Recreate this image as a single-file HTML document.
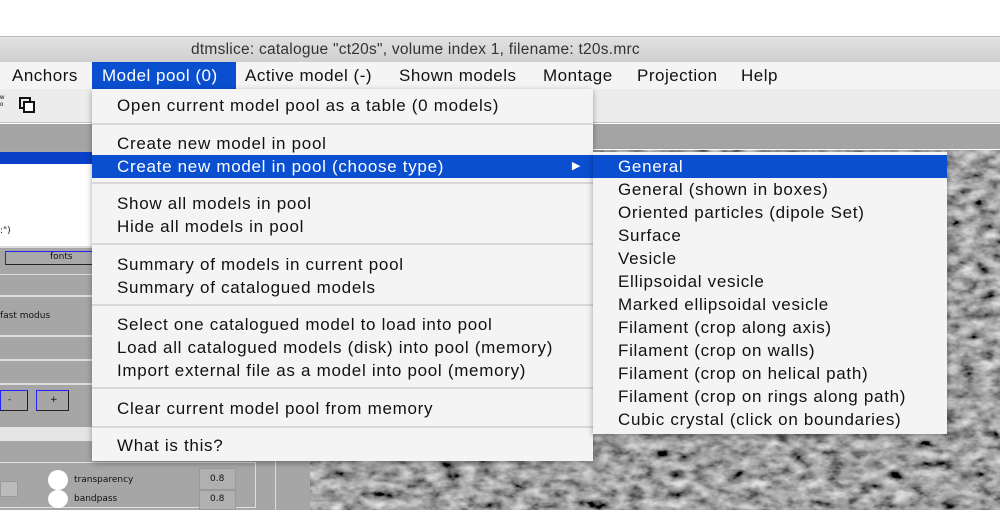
<!DOCTYPE html>
<html><head><meta charset="utf-8"><style>
*{margin:0;padding:0;box-sizing:border-box}
body{width:1000px;height:523px;overflow:hidden;background:#fff;font-family:"Liberation Sans",sans-serif;position:relative}
.a{position:absolute}
.title{left:0;top:36px;width:1000px;height:26px;background:linear-gradient(#e2e2e2,#cfcfcf);border-top:1px solid #bbb;font-size:15.5px;line-height:26px;color:#333}
.mb{left:0;top:62px;width:1000px;height:27px;background:#f4f4f4;font-size:17px;letter-spacing:0.5px;line-height:27px;color:#111}
.mb span{position:absolute;top:0}
.menu{background:#f4f4f4;box-shadow:0 2px 6px rgba(0,0,0,.35);font-size:17px;letter-spacing:0.7px;color:#111}
.it{position:absolute;left:0;right:0;height:23px;line-height:23px;padding-left:25px;white-space:nowrap}
.hl{background:#0a4fd0;color:#fff}
.sep{position:absolute;left:0;right:0;height:2px;background:#d8d8d8}
.sm{font-size:9px;font-family:"DejaVu Sans",sans-serif;color:#111}
</style></head><body>
<div class="a title"><span style="position:absolute;left:191px;letter-spacing:0.25px">dtmslice: catalogue "ct20s", volume index 1, filename: t20s.mrc</span></div>
<div class="a mb">
<span style="left:12px">Anchors</span>
<span style="left:92px;width:144px;height:27px;background:#0a4fd0;color:#fff;padding-left:10px">Model pool (0)</span>
<span style="left:245px">Active model (-)</span>
<span style="left:399px">Shown models</span>
<span style="left:543px">Montage</span>
<span style="left:637px">Projection</span>
<span style="left:741px">Help</span>
</div>
<div class="a" style="left:0;top:89px;width:1000px;height:34px;background:#ececec;border-bottom:1px solid #c4c4c4"></div>
<div class="a" style="left:0;top:95px;font-size:6px;line-height:7px">w<br>o</div>
<div class="a" style="left:19px;top:97px;width:12px;height:12px;border:2px solid #111"></div>
<div class="a" style="left:23px;top:101px;width:12px;height:12px;border:2px solid #111;background:#fff"></div>
<div class="a" style="left:0;top:124px;width:1000px;height:25px;background:#a4a4a4"></div>
<svg class="a" style="left:310px;top:150px" width="690" height="360"><filter id="n"><feTurbulence type="fractalNoise" baseFrequency="0.06 0.1" numOctaves="3" seed="4"/><feColorMatrix type="matrix" values="0.6 0.6 0.6 0 -0.55 0.6 0.6 0.6 0 -0.55 0.6 0.6 0.6 0 -0.55 0 0 0 0 1"/></filter><rect width="690" height="360" fill="#666"/><rect width="690" height="360" filter="url(#n)"/></svg>
<div class="a" style="left:0;top:149px;width:310px;height:361px;background:#a6a6a6"></div>
<div class="a" style="left:0;top:152px;width:300px;height:12px;background:#0a3fc8"></div>
<div class="a" style="left:0;top:164px;width:300px;height:82px;background:#fff"></div>
<div class="a sm" style="left:0;top:226px">:")</div>
<div class="a" style="left:0;top:246px;width:300px;height:2px;background:#ddd"></div>
<div class="a" style="left:5px;top:251px;width:290px;height:14px;background:#a8a8a8;border:1px solid #222;border-top-color:#22f;border-left-color:#22f"></div>
<div class="a sm" style="left:50px;top:252px">fonts</div>
<div class="a" style="left:0;top:274px;width:300px;height:1px;background:#ddd"></div>
<div class="a" style="left:0;top:295px;width:300px;height:2px;background:#ddd"></div>
<div class="a sm" style="left:0;top:311px">fast modus</div>
<div class="a" style="left:0;top:335px;width:300px;height:2px;background:#ddd"></div>
<div class="a" style="left:0;top:359px;width:300px;height:2px;background:#ddd"></div>
<div class="a" style="left:0;top:383px;width:300px;height:2px;background:#ddd"></div>
<div class="a" style="left:0;top:390px;width:28px;height:21px;border:1px solid #222;border-top-color:#22f;border-left-color:#22f"></div>
<div class="a sm" style="left:8px;top:395px">-</div>
<div class="a" style="left:36px;top:390px;width:33px;height:21px;border:1px solid #222;border-top-color:#22f;border-left-color:#22f"></div>
<div class="a sm" style="left:50px;top:395px">+</div>
<div class="a" style="left:0;top:427px;width:300px;height:14px;background:#e4e4e4"></div>
<div class="a" style="left:0;top:462px;width:256px;height:46px;border:1px solid #e0e0e0;border-left:none"></div>
<div class="a" style="left:0;top:481px;width:18px;height:16px;background:#bbb;border:1px solid #999"></div>
<div class="a" style="left:48px;top:470px;width:20px;height:20px;border-radius:50%;background:#fff"></div>
<div class="a" style="left:48px;top:490px;width:20px;height:18px;border-radius:50%;background:#fff"></div>
<div class="a sm" style="left:74px;top:475px">transparency</div>
<div class="a sm" style="left:74px;top:494px">bandpass</div>
<div class="a" style="left:199px;top:468px;width:37px;height:22px;background:#b0b0b0;border:1px solid #999"></div>
<div class="a" style="left:199px;top:490px;width:37px;height:20px;background:#b0b0b0;border:1px solid #999"></div>
<div class="a sm" style="left:210px;top:474px">0.8</div>
<div class="a sm" style="left:210px;top:494px">0.8</div>
<div class="a" style="left:275px;top:460px;width:1px;height:50px;background:#ddd"></div>
<div class="a menu" style="left:92px;top:89px;width:501px;height:372px">
<div class="it" style="top:5px">Open current model pool as a table (0 models)</div>
<div class="sep" style="top:34px"></div>
<div class="it" style="top:43px">Create new model in pool</div>
<div class="it hl" style="top:66px">Create new model in pool (choose type)<span style="position:absolute;right:12px;font-size:11px">&#9654;</span></div>
<div class="sep" style="top:93px"></div>
<div class="it" style="top:103px">Show all models in pool</div>
<div class="it" style="top:126px">Hide all models in pool</div>
<div class="sep" style="top:154px"></div>
<div class="it" style="top:164px">Summary of models in current pool</div>
<div class="it" style="top:187px">Summary of catalogued models</div>
<div class="sep" style="top:215px"></div>
<div class="it" style="top:224px">Select one catalogued model to load into pool</div>
<div class="it" style="top:247px">Load all catalogued models (disk) into pool (memory)</div>
<div class="it" style="top:270px">Import external file as a model into pool (memory)</div>
<div class="sep" style="top:298px"></div>
<div class="it" style="top:308px">Clear current model pool from memory</div>
<div class="sep" style="top:337px"></div>
<div class="it" style="top:345px">What is this?</div>
</div>
<div class="a menu" style="left:593px;top:152px;width:354px;height:282px">
<div class="it hl" style="top:3px">General</div>
<div class="it" style="top:26px">General (shown in boxes)</div>
<div class="it" style="top:49px">Oriented particles (dipole Set)</div>
<div class="it" style="top:72px">Surface</div>
<div class="it" style="top:95px">Vesicle</div>
<div class="it" style="top:118px">Ellipsoidal vesicle</div>
<div class="it" style="top:141px">Marked ellipsoidal vesicle</div>
<div class="it" style="top:164px">Filament (crop along axis)</div>
<div class="it" style="top:187px">Filament (crop on walls)</div>
<div class="it" style="top:210px">Filament (crop on helical path)</div>
<div class="it" style="top:233px">Filament (crop on rings along path)</div>
<div class="it" style="top:256px">Cubic crystal (click on boundaries)</div>
</div>
</body></html>
